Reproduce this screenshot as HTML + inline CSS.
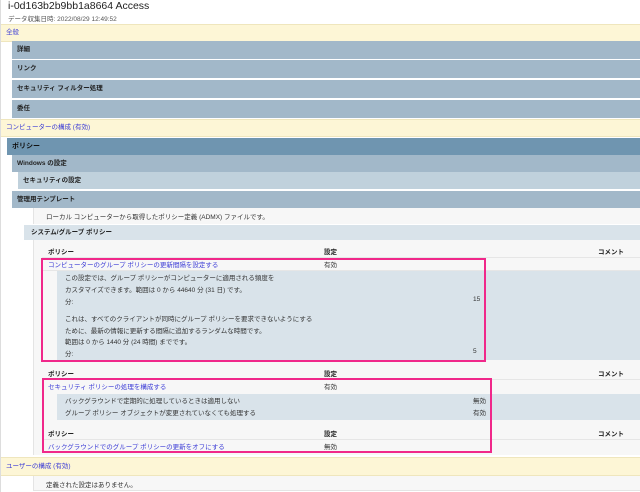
<!DOCTYPE html>
<html><head><meta charset="utf-8"><style>
*{margin:0;padding:0;box-sizing:border-box}
body{width:640px;height:492px;overflow:hidden;background:#fff;font-family:"Liberation Sans","Noto Sans CJK JP",sans-serif;font-size:6.5px;color:#333;position:relative}
div{position:absolute}
.t{white-space:nowrap}
.y{left:1px;right:0;background:#fdf6d6;border-top:1px solid #efe6bd;border-bottom:1px solid #efe6bd;color:#3b3bd6;padding-left:5px}
.b1{background:#a2b8c9;font-weight:bold;color:#222;padding-left:5px}
.b0{background:#6f95b0;font-weight:bold;color:#111;padding-left:5px}
.b2{background:#c0d1dc;font-weight:bold;color:#222;padding-left:5px}
.b3{background:#d9e3ea;font-weight:bold;color:#222;padding-left:7px}
.lk{color:#3b3bd6}
.h{font-weight:bold;color:#222}
.pink{border:2px solid #f0288a}
.gl{background:#f7f7f7}
</style></head><body>
<div style="left:0;top:0;width:1px;height:492px;background:#ddd"></div>
<div class="t" style="left:8px;top:0px;font-size:10.5px;color:#222">i-0d163b2b9bb1a8664 Access</div>
<div class="t" style="left:8px;top:13px;font-size:6.5px;color:#555">データ収集日時: 2022/08/29 12:49:52</div>

<div class="y" style="top:24px;height:18px;line-height:16px">全般</div>
<div class="b1" style="left:12px;right:0;top:41px;height:18px;line-height:18px">詳細</div>
<div class="b1" style="left:12px;right:0;top:60px;height:18px;line-height:18px">リンク</div>
<div class="b1" style="left:12px;right:0;top:80px;height:18px;line-height:18px">セキュリティ フィルター処理</div>
<div class="b1" style="left:12px;right:0;top:100px;height:18px;line-height:18px">委任</div>
<div class="y" style="top:119px;height:18px;line-height:16px">コンピューターの構成 (有効)</div>
<div class="b0" style="left:7px;right:0;top:138px;height:17px;line-height:17px;font-size:7px">ポリシー</div>
<div class="b1" style="left:12px;right:0;top:155px;height:17px;line-height:17px">Windows の設定</div>
<div class="b2" style="left:18px;right:0;top:172px;height:17px;line-height:17px">セキュリティの設定</div>
<div class="b1" style="left:12px;right:0;top:191px;height:17px;line-height:17px">管理用テンプレート</div>
<div class="gl" style="left:33px;right:0;top:208px;height:16px;border-left:1px solid #e4e4e4"></div>
<div class="t" style="left:46px;top:211px">ローカル コンピューターから取得したポリシー定義 (ADMX) ファイルです。</div>
<div class="b3" style="left:24px;right:0;top:225px;height:15px;line-height:15px">システム/グループ ポリシー</div>

<div class="gl" style="left:33px;right:0;top:240px;height:215px;border-left:1px solid #e4e4e4"></div>
<div style="left:42px;right:0;top:257px;height:1px;background:#e6e6e6"></div>
<div style="left:42px;right:0;top:270px;height:1px;background:#e6e6e6"></div>
<div class="t h" style="left:48px;top:246px">ポリシー</div>
<div class="t h" style="left:324px;top:246px">設定</div>
<div class="t h" style="left:598px;top:246px">コメント</div>
<div class="t lk" style="left:48px;top:259px">コンピューターのグループ ポリシーの更新間隔を設定する</div>
<div class="t" style="left:324px;top:259px">有効</div>
<div style="left:57px;right:0;top:271px;height:89px;background:#d9e3ea"></div>
<div class="t" style="left:65px;top:272px">この設定では、グループ ポリシーがコンピューターに適用される頻度を</div>
<div class="t" style="left:65px;top:284px">カスタマイズできます。範囲は 0 から 44640 分 (31 日) です。</div>
<div class="t" style="left:65px;top:296px">分:</div>
<div class="t" style="left:473px;top:296px">15</div>
<div class="t" style="left:65px;top:313px">これは、すべてのクライアントが同時にグループ ポリシーを要求できないようにする</div>
<div class="t" style="left:65px;top:325px">ために、最新の情報に更新する間隔に追加するランダムな時間です。</div>
<div class="t" style="left:65px;top:336px">範囲は 0 から 1440 分 (24 時間) までです。</div>
<div class="t" style="left:65px;top:348px">分:</div>
<div class="t" style="left:473px;top:348px">5</div>
<div class="pink" style="left:41px;top:258px;width:445px;height:104px"></div>

<div style="left:42px;right:0;top:379px;height:1px;background:#e6e6e6"></div>
<div class="t h" style="left:48px;top:368px">ポリシー</div>
<div class="t h" style="left:324px;top:368px">設定</div>
<div class="t h" style="left:598px;top:368px">コメント</div>
<div class="t lk" style="left:48px;top:381px">セキュリティ ポリシーの処理を構成する</div>
<div class="t" style="left:324px;top:381px">有効</div>
<div style="left:57px;right:0;top:394px;height:26px;background:#d9e3ea"></div>
<div class="t" style="left:65px;top:395px">バックグラウンドで定期的に処理しているときは適用しない</div>
<div class="t" style="left:473px;top:395px">無効</div>
<div class="t" style="left:65px;top:407px">グループ ポリシー オブジェクトが変更されていなくても処理する</div>
<div class="t" style="left:473px;top:407px">有効</div>
<div style="left:42px;right:0;top:439px;height:1px;background:#e6e6e6"></div>
<div class="t h" style="left:48px;top:428px">ポリシー</div>
<div class="t h" style="left:324px;top:428px">設定</div>
<div class="t h" style="left:598px;top:428px">コメント</div>
<div class="t lk" style="left:48px;top:441px">バックグラウンドでのグループ ポリシーの更新をオフにする</div>
<div class="t" style="left:324px;top:441px">無効</div>
<div class="pink" style="left:42px;top:378px;width:450px;height:75px"></div>

<div class="y" style="top:457px;height:19px;line-height:17px">ユーザーの構成 (有効)</div>
<div class="gl" style="left:33px;right:0;top:476px;height:15px;border-left:1px solid #e4e4e4;border-bottom:1px solid #e4e4e4"></div>
<div class="t" style="left:46px;top:479px">定義された設定はありません。</div>
</body></html>
